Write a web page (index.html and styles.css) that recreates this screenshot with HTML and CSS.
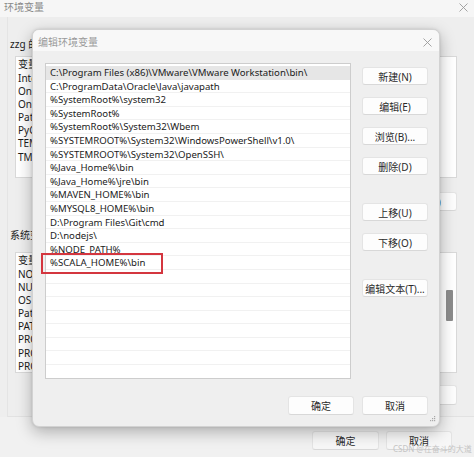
FILE: index.html
```html
<!DOCTYPE html>
<html lang="zh-CN">
<head>
<meta charset="utf-8">
<title>编辑环境变量</title>
<link rel="stylesheet" href="styles.css">
</head>
<body>
<div class="desktop">
  <div class="bgwin">
    <div class="bg-title">
      <span class="bg-title-text">环境变量</span>
      <svg class="x-icon bg-x" width="9" height="9" viewBox="0 0 9 9"><path d="M0.5 0.5L8.5 8.5M8.5 0.5L0.5 8.5" stroke="#9a9a9a" stroke-width="0.9" fill="none"/></svg>
    </div>
    <div class="bg-body">
      <div class="bg-label">zzg 的用户变量(U)</div>
      <div class="bg-list user">
        <div class="bg-row head">变量</div>
        <div class="bg-row">IntelliJ IDEA</div>
        <div class="bg-row">OneDrive</div>
        <div class="bg-row">OneDriveConsumer</div>
        <div class="bg-row">Path</div>
        <div class="bg-row">PyCharm</div>
        <div class="bg-row">TEMP</div>
        <div class="bg-row">TMP</div>
      </div>
      <div class="bg-btnrow first">
        <button class="btn bg-btn">新建(N)...</button>
        <button class="btn bg-btn">编辑(E)...</button>
        <button class="btn bg-btn">删除(D)</button>
      </div>
      <div class="bg-label sys-label">系统变量(S)</div>
      <div class="bg-list sys">
        <div class="bg-row head">变量</div>
        <div class="bg-row">NODE_PATH</div>
        <div class="bg-row">NUMBER_OF_PROCESSORS</div>
        <div class="bg-row">OS</div>
        <div class="bg-row">Path</div>
        <div class="bg-row">PATHEXT</div>
        <div class="bg-row">PROCESSOR_ARCHITECTURE</div>
        <div class="bg-row">PROCESSOR_IDENTIFIER</div>
        <div class="bg-row">PROCESSOR_LEVEL</div>
        <div class="thumb"></div>
      </div>
      <div class="bg-btnrow second">
        <button class="btn bg-btn">新建(W)...</button>
        <button class="btn bg-btn">编辑(I)...</button>
        <button class="btn bg-btn">删除(L)</button>
      </div>
    </div>
    <div class="bg-footer">
      <button class="btn foot-btn ok">确定</button>
      <button class="btn foot-btn">取消</button>
    </div>
  </div>

  <div class="dialog">
    <div class="dlg-title">
      <span class="dlg-title-text">编辑环境变量</span>
      <svg class="x-icon dlg-x" width="9" height="9" viewBox="0 0 9 9"><path d="M0.5 0.5L8.5 8.5M8.5 0.5L0.5 8.5" stroke="#9a9a9a" stroke-width="0.9" fill="none"/></svg>
    </div>
    <div class="dlg-body">
      <div class="dlg-main">
        <div class="path-list">
          <div class="prow sel">C:\Program Files (x86)\VMware\VMware Workstation\bin\</div>
          <div class="prow">C:\ProgramData\Oracle\Java\javapath</div>
          <div class="prow">%SystemRoot%\system32</div>
          <div class="prow">%SystemRoot%</div>
          <div class="prow">%SystemRoot%\System32\Wbem</div>
          <div class="prow">%SYSTEMROOT%\System32\WindowsPowerShell\v1.0\</div>
          <div class="prow">%SYSTEMROOT%\System32\OpenSSH\</div>
          <div class="prow">%Java_Home%\bin</div>
          <div class="prow">%Java_Home%\jre\bin</div>
          <div class="prow">%MAVEN_HOME%\bin</div>
          <div class="prow">%MYSQL8_HOME%\bin</div>
          <div class="prow">D:\Program Files\Git\cmd</div>
          <div class="prow">D:\nodejs\</div>
          <div class="prow">%NODE_PATH%</div>
          <div class="prow">%SCALA_HOME%\bin</div>
          <div class="prow"></div>
          <div class="prow"></div>
          <div class="prow"></div>
          <div class="prow"></div>
          <div class="prow"></div>
          <div class="prow"></div>
          <div class="prow"></div>
          <div class="prow"></div>
          <div class="prow"></div>
          <div class="prow"></div>
        </div>
        <div class="side-btns">
          <button class="btn side">新建(N)</button>
          <button class="btn side">编辑(E)</button>
          <button class="btn side">浏览(B)...</button>
          <button class="btn side">删除(D)</button>
          <button class="btn side gap-before">上移(U)</button>
          <button class="btn side">下移(O)</button>
          <button class="btn side gap-before">编辑文本(T)...</button>
        </div>
      </div>
      <div class="dlg-footer">
        <button class="btn dfoot">确定</button>
        <button class="btn dfoot">取消</button>
      </div>
    </div>
    <svg class="grip" width="7" height="7" viewBox="0 0 7 7"><g fill="#a8a8a8"><rect x="5" y="0" width="1.2" height="1.2"/><rect x="3" y="2" width="1.2" height="1.2"/><rect x="5" y="2" width="1.2" height="1.2"/><rect x="1" y="4" width="1.2" height="1.2"/><rect x="3" y="4" width="1.2" height="1.2"/><rect x="5" y="4" width="1.2" height="1.2"/></g></svg>
    <div class="highlight"></div>
  </div>

  <div class="watermark">CSDN @在奋斗的大道</div>
</div>
</body>
</html>
```

FILE: styles.css
```css
* { box-sizing: border-box; }
html, body { margin: 0; padding: 0; }
body {
  font-family: "Noto Sans", "Noto Sans CJK SC", sans-serif;
  background: #eeeeee;
  color: #1b1b1b;
}
.desktop {
  position: relative;
  width: 474px;
  height: 457px;
  overflow: hidden;
}
.btn {
  font-family: "Noto Sans", "Noto Sans CJK SC", sans-serif;
  font-size: 10px;
  color: #2a2a2a;
  background: #fdfdfd;
  border: 1px solid #e4e4e4;
  border-bottom-color: #d8d8d8;
  border-radius: 3px;
  padding: 0;
  margin: 0;
  display: flex;
  align-items: center;
  justify-content: center;
  white-space: nowrap;
}

/* background window */
.bgwin {
  width: 474px;
  height: 457px;
  display: flex;
  flex-direction: column;
  background: #eeeeee;
}
.bg-title {
  height: 17px;
  flex: none;
  background: #f6f6f6;
  display: flex;
  align-items: center;
  justify-content: space-between;
  padding: 0 6px 2px 4px;
}
.bg-title-text {
  font-size: 10px;
  color: #8a8a8a;
  line-height: 13px;
}
.bg-body {
  margin-left: 7px;
  height: 400px;
  flex: none;
  border-left: 1px solid #e4e4e4;
  border-bottom: 1px solid #e2e2e2;
  padding: 0 17px 0 2px;
  display: flex;
  flex-direction: column;
}
.bg-label {
  font-size: 10px;
  line-height: 13px;
  height: 13px;
  margin-top: 21px;
  color: #1b1b1b;
}
.sys-label { margin-top: 18px; }
.bg-list {
  position: relative;
  margin-left: 5px;
  background: #ffffff;
  border: 1px solid #d9d9d9;
  overflow: hidden;
  padding-left: 2px;
}
.bg-list.user { margin-top: 5px; height: 122px; }
.bg-list.sys { margin-top: 10px; height: 121px; padding-top: 0; }
.bg-row {
  font-size: 10px;
  height: 13.2px;
  line-height: 13.2px;
  white-space: nowrap;
}
.bg-row.head { height: 14.5px; line-height: 14.5px; }
.thumb {
  position: absolute;
  right: 3px;
  top: 37px;
  width: 7px;
  height: 31px;
  background: #8c8c8c;
  border-radius: 1px;
}
.bg-btnrow {
  display: flex;
  justify-content: flex-end;
  gap: 8px;
}
.bg-btnrow.first { margin-top: 14px; height: 19px; }
.bg-btnrow.second { margin-top: 12px; height: 20px; }
.bg-btn { width: 66px; height: 100%; }
.bg-footer {
  flex: 1;
  display: flex;
  justify-content: flex-end;
  gap: 7px;
  padding: 14px 22px 0 0;
  background: #f1f1f1;
}
.foot-btn { width: 66px; height: 19px; background: #f7f7f7; }
.foot-btn.ok { width: 67px; }

/* dialog */
.dialog {
  position: absolute;
  left: 32px;
  top: 29px;
  width: 408px;
  height: 398px;
  border-radius: 7px;
  background: #efefef;
  border: 1px solid #d2d2d2;
  box-shadow: 0 5px 16px rgba(0, 0, 0, 0.28), 0 0 3px rgba(0, 0, 0, 0.12);
  display: flex;
  flex-direction: column;
  overflow: hidden;
}
.dlg-title {
  height: 21px;
  flex: none;
  background: #f8f8f8;
  display: flex;
  align-items: center;
  justify-content: space-between;
  padding: 4px 7px 0 5px;
}
.dlg-title-text {
  font-size: 10px;
  color: #9a9a9a;
  line-height: 13px;
}
.dlg-body {
  flex: 1;
  display: flex;
  flex-direction: column;
  padding: 12px 11px 0 12px;
}
.dlg-main {
  display: flex;
  gap: 11px;
  height: 316px;
}
.path-list {
  width: 307px;
  height: 316px;
  background: #ffffff;
  border: 1px solid #cdcdcd;
  padding-top: 2px;
  overflow: hidden;
}
.prow {
  height: 13.6px;
  line-height: 13px;
  padding-left: 4px;
  font-size: 9.6px;
  color: #1b1b1b;
  white-space: nowrap;
  border-bottom: 1px solid #f1f1f1;
}
.prow.sel { background: #e6e6e6; border-bottom-color: #e6e6e6; }
.side-btns {
  display: flex;
  flex-direction: column;
  gap: 12px;
  padding-top: 4px;
}
.btn.side { width: 66px; height: 18px; }
.btn.side.gap-before { margin-top: 16px; }
.dlg-footer {
  display: flex;
  justify-content: flex-end;
  gap: 8px;
  margin-top: 17px;
}
.dfoot { width: 66px; height: 19px; }
.grip {
  position: absolute;
  right: 3px;
  bottom: 3px;
}
.highlight {
  position: absolute;
  left: 8px;
  top: 223px;
  width: 122px;
  height: 21px;
  border: 2px solid #d4363f;
}
.watermark {
  position: absolute;
  left: 393px;
  top: 443px;
  font-size: 8px;
  line-height: 11px;
  color: #c4c4c4;
  white-space: nowrap;
}
```
